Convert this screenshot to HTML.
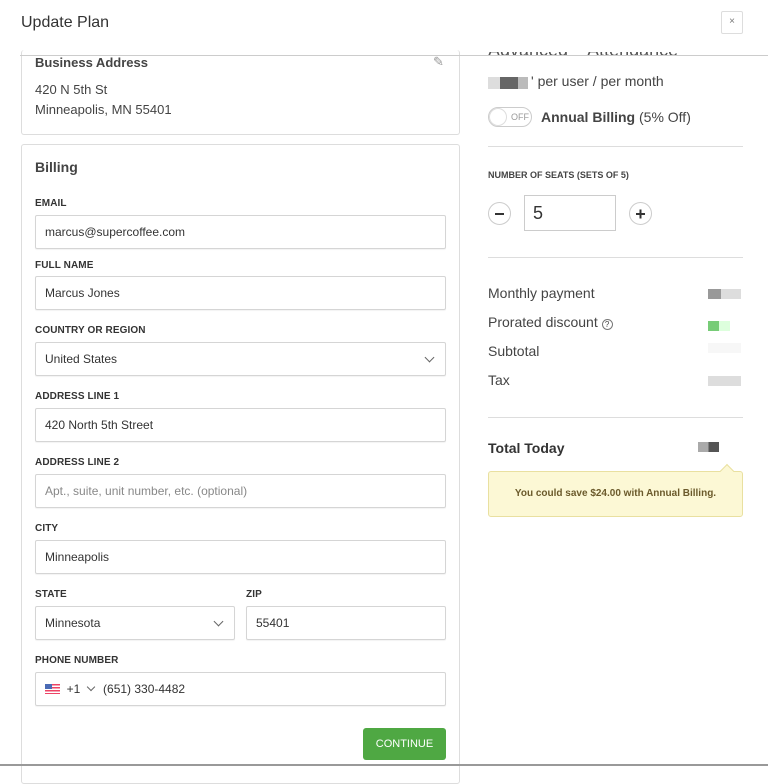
<!DOCTYPE html>
<html><head><style>
*{box-sizing:border-box;margin:0;padding:0}
body{width:768px;height:766px;background:#fff;position:relative;overflow:hidden;font-family:"Liberation Sans",sans-serif;color:#333}
.a{position:absolute}
.card{position:absolute;border:1px solid #ddd;border-radius:3px;background:#fff}
.lbl{position:absolute;left:35px;font-size:10px;font-weight:bold;color:#333;letter-spacing:.1px}
.inp{position:absolute;left:35px;width:411px;height:34px;border:1px solid #d5d5d5;border-radius:2px;font-size:12px;color:#333;padding:0 9px;line-height:32px;box-shadow:0 1px 1px rgba(0,0,0,.05)}
.chev{position:absolute;right:12px;top:11px;width:7px;height:7px;border-right:1px solid #666;border-bottom:1px solid #666;transform:rotate(45deg)}
.r{position:absolute;left:488px;font-size:14px;color:#444}
.hr{position:absolute;left:488px;width:255px;height:1px;background:#ddd}
.blur{position:absolute;height:10px}
.circ{position:absolute;top:202px;width:23px;height:23px;border:1px solid #ccc;border-radius:50%}
.circ i{position:absolute;left:6px;top:10px;width:9px;height:2px;background:#333}
</style></head><body>
<div class="a" style="left:21px;top:14px;font-size:16px;color:#333">Update Plan</div>
<div class="a" style="left:721px;top:11px;width:22px;height:23px;border:1px solid #ddd;border-radius:2px;font-size:10px;color:#777;text-align:center;line-height:20px">×</div>
<div class="a" style="left:488px;top:40px;font-size:18px;color:#555;clip-path:inset(12px 0 0 0)">Advanced – Attendance</div>

<div class="card" style="left:21px;top:50px;width:439px;height:85px;border-top:none"></div>
<div class="a" style="left:20px;top:55px;width:748px;height:1px;background:#ccc"></div>
<div class="a" style="left:35px;top:55px;font-size:13px;font-weight:bold;color:#444">Business Address</div>
<div class="a" style="left:433px;top:54px;font-size:13px;color:#999">✎</div>
<div class="a" style="left:35px;top:80px;font-size:13px;color:#444;line-height:20px">420 N 5th St<br>Minneapolis, MN 55401</div>

<div class="card" style="left:21px;top:144px;width:439px;height:640px"></div>
<div class="a" style="left:35px;top:159px;font-size:14px;font-weight:bold;color:#444">Billing</div>

<div class="lbl" style="top:198px">EMAIL</div>
<div class="inp" style="top:215px">marcus@supercoffee.com</div>
<div class="lbl" style="top:260px">FULL NAME</div>
<div class="inp" style="top:276px">Marcus Jones</div>
<div class="lbl" style="top:325px">COUNTRY OR REGION</div>
<div class="inp" style="top:342px">United States<span class="chev"></span></div>
<div class="lbl" style="top:391px">ADDRESS LINE 1</div>
<div class="inp" style="top:408px">420 North 5th Street</div>
<div class="lbl" style="top:457px">ADDRESS LINE 2</div>
<div class="inp" style="top:474px;color:#888">Apt., suite, unit number, etc. (optional)</div>
<div class="lbl" style="top:523px">CITY</div>
<div class="inp" style="top:540px">Minneapolis</div>
<div class="lbl" style="top:589px">STATE</div>
<div class="inp" style="top:606px;width:200px">Minnesota<span class="chev"></span></div>
<div class="lbl" style="top:589px;left:246px">ZIP</div>
<div class="inp" style="top:606px;left:246px;width:200px">55401</div>
<div class="lbl" style="top:655px">PHONE NUMBER</div>
<div class="inp" style="top:672px"><span style="display:inline-block;width:15px;height:10px;vertical-align:-1px;background:repeating-linear-gradient(#e46 0 1.5px,#fff 1.5px 3px);position:relative"><span style="position:absolute;left:0;top:0;width:7px;height:5px;background:#4a6bb5"></span></span>&nbsp; +1 <span style="display:inline-block;width:6px;height:6px;border-right:1px solid #666;border-bottom:1px solid #666;transform:rotate(45deg);margin:0 6px 3px 4px"></span> (651) 330-4482</div>
<div class="a" style="left:363px;top:728px;width:83px;height:32px;background:#4fa843;border-radius:3px;color:#fff;font-size:11px;text-align:center;line-height:32px">CONTINUE</div>
<div class="a" style="left:0;top:764px;width:768px;height:2px;background:#999"></div>

<div class="blur" style="left:488px;top:77px;width:40px;height:12px;background:linear-gradient(90deg,#ddd 0 30%,#666 30% 75%,#bbb 75%)"></div>
<div class="r" style="left:531px;top:73px">' per user / per month</div>
<div class="a" style="left:488px;top:107px;width:44px;height:20px;border:1px solid #ccc;border-radius:10px;font-size:9px;color:#999;padding-left:22px;line-height:18px">OFF</div>
<div class="a" style="left:489px;top:108px;width:18px;height:18px;border-radius:50%;background:#fff;border:1px solid #ddd"></div>
<div class="r" style="left:541px;top:109px"><b>Annual Billing</b> (5% Off)</div>
<div class="hr" style="top:146px"></div>
<div class="a" style="left:488px;top:170px;font-size:9px;font-weight:bold;color:#444">NUMBER OF SEATS (SETS OF 5)</div>
<div class="circ" style="left:488px"><i></i></div>
<div class="a" style="left:524px;top:195px;width:92px;height:36px;border:1px solid #ccc;font-size:18px;padding-left:8px;line-height:34px">5</div>
<div class="circ" style="left:629px"><i></i><i style="transform:rotate(90deg)"></i></div>
<div class="hr" style="top:257px"></div>
<div class="r" style="top:285px">Monthly payment</div>
<div class="blur" style="left:708px;top:289px;width:33px;background:linear-gradient(90deg,#999 0 40%,#ddd 40%)"></div>
<div class="r" style="top:314px">Prorated discount <span style="border:1px solid #777;border-radius:50%;display:inline-block;width:11px;height:11px;text-align:center;line-height:10px;font-size:8px">?</span></div>
<div class="blur" style="left:708px;top:321px;width:22px;background:linear-gradient(90deg,#7c7 0 50%,#dfd 50%)"></div>
<div class="r" style="top:343px">Subtotal</div>
<div class="blur" style="left:708px;top:343px;width:33px;background:#f7f7f7"></div>
<div class="r" style="top:372px">Tax</div>
<div class="blur" style="left:708px;top:376px;width:33px;background:#ddd"></div>
<div class="hr" style="top:417px"></div>
<div class="r" style="top:440px;font-weight:bold;color:#333">Total Today</div>
<div class="blur" style="left:698px;top:442px;width:21px;background:linear-gradient(90deg,#aaa 0 50%,#555 50%)"></div>
<div class="a" style="left:488px;top:471px;width:255px;height:46px;background:#fcf8d5;border:1px solid #e9e0a0;border-radius:3px;font-size:10px;color:#6b5a2b;text-align:center;line-height:44px;font-weight:bold">You could save $24.00 with Annual Billing.</div>
<div class="a" style="left:722px;top:466px;width:10px;height:10px;background:#fcf8d5;border-left:1px solid #e9e0a0;border-top:1px solid #e9e0a0;transform:rotate(45deg)"></div>
</body></html>
